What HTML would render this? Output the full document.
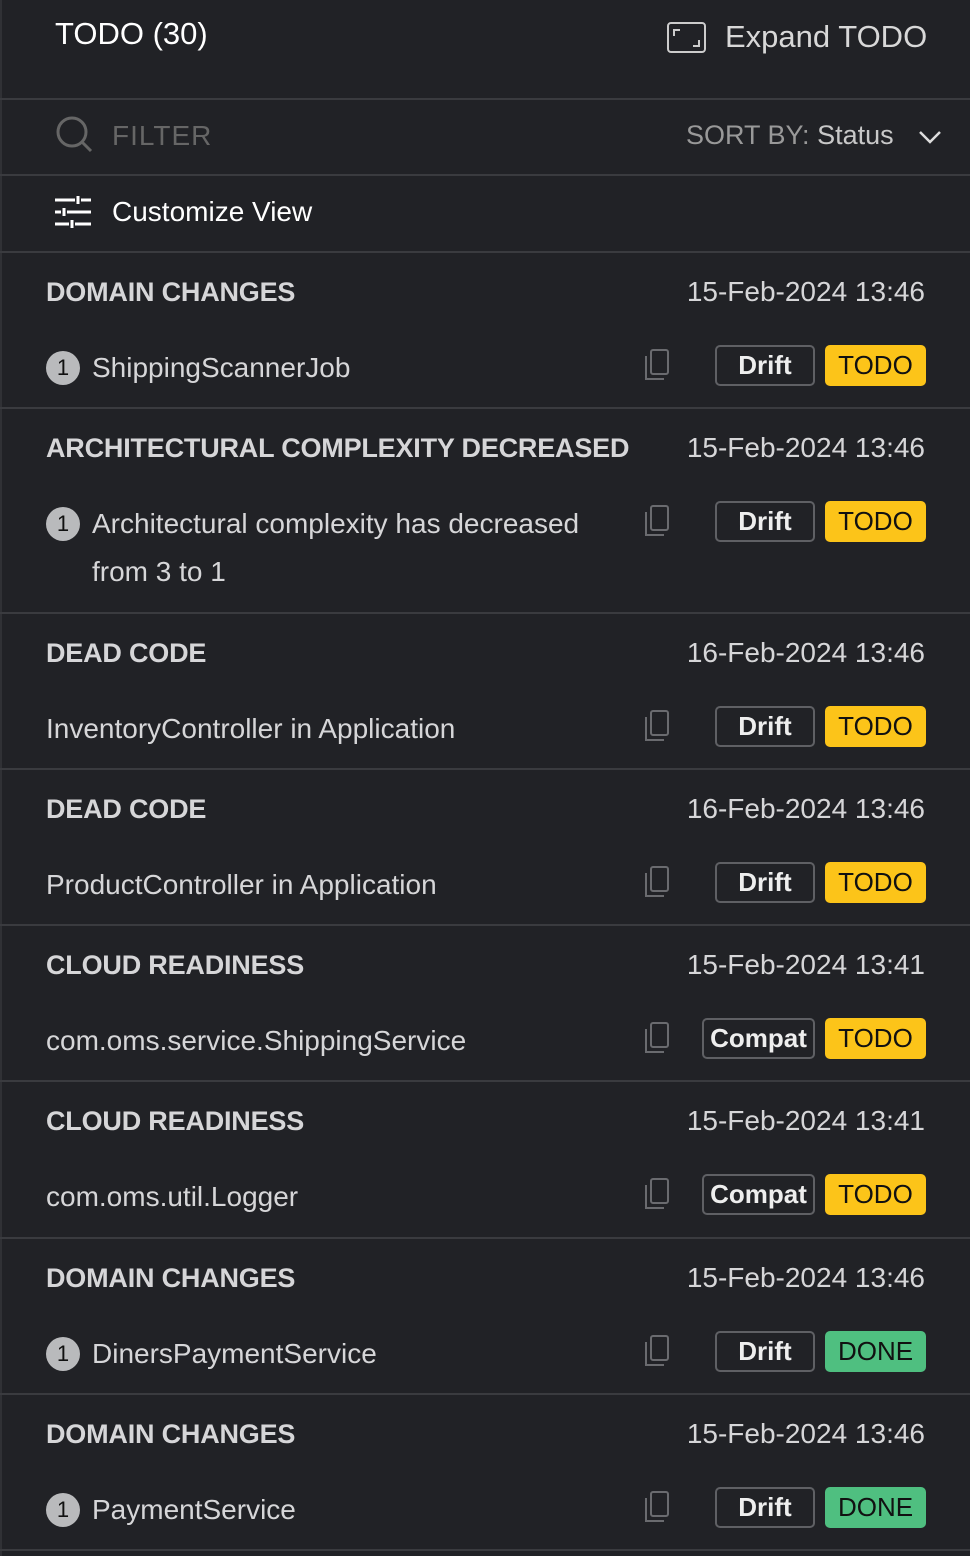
<!DOCTYPE html>
<html><head><style>
*{margin:0;padding:0;box-sizing:border-box}
body{width:970px;height:1556px;background:#212226;font-family:"Liberation Sans",sans-serif;color:#d9d9db;position:relative;overflow:hidden}
.a{position:absolute;white-space:nowrap}
.ln{position:absolute;left:0;width:970px;height:2px;background:#3a3b3f}
.t{font-size:27px;font-weight:bold;letter-spacing:-0.2px;color:#d6d6d8}
.d{font-size:28px;color:#d6d6d8;right:45px}
.b{font-size:28px;color:#d6d6d8}
.n{width:34px;height:34px;border-radius:50%;background:#b9babc;color:#111;font-size:22px;text-align:center;line-height:34px}
.bx{height:41px;border:2px solid #5f6064;border-radius:5px;font-size:26px;font-weight:bold;color:#eee;text-align:center;line-height:37px}
.st{height:41px;border-radius:5px;font-size:26px;color:#111;text-align:center;line-height:41px;left:825px;width:101px}
.y{background:#fcc419}.g{background:#4fbf80}
</style></head><body>
<div class="a" style="left:0;top:0;width:2px;height:1556px;background:#303135"></div>
<div class="a" style="left:55px;top:16px;font-size:31px;color:#fff">TODO (30)</div>
<svg class="a" style="left:667px;top:22px" width="40" height="32" viewBox="0 0 40 32"><rect x="1" y="1" width="37" height="29" rx="3" fill="none" stroke="#ccc" stroke-width="2"/><path d="M7 14V8h6M32 18v6h-6" fill="none" stroke="#ccc" stroke-width="2"/></svg>
<div class="a" style="left:725px;top:19px;font-size:31px;color:#d8d8d8">Expand TODO</div>
<div class="ln" style="top:98px"></div>
<svg class="a" style="left:56px;top:116px" width="38" height="38" viewBox="0 0 38 38"><circle cx="16" cy="16" r="14" fill="none" stroke="#666" stroke-width="3"/><path d="M26 26l9 9" stroke="#666" stroke-width="3"/></svg>
<div class="a" style="left:112px;top:120px;font-size:28px;color:#666;letter-spacing:1px">FILTER</div>
<div class="a" style="left:686px;top:120px;font-size:27px;color:#999">SORT BY: <span style="color:#c8c8c8">Status</span></div>
<svg class="a" style="left:918px;top:128px" width="24" height="18" viewBox="0 0 24 18"><path d="M2 4l10 10 10-10" fill="none" stroke="#ddd" stroke-width="2.5"/></svg>
<div class="ln" style="top:174px"></div>
<svg class="a" style="left:55px;top:196px" width="36" height="32" viewBox="0 0 36 32"><g stroke="#fff" stroke-width="3"><path d="M0 4h20M26 4h10M23 0v8M0 16h6M12 16h24M9 12v8M0 28h14M20 28h16M17 24v8"/></g></svg>
<div class="a" style="left:112px;top:196px;font-size:28px;color:#fff">Customize View</div>
<div class="ln" style="top:251px"></div>

<div id="items"></div>
<script>
const it=[
["DOMAIN CHANGES","15-Feb-2024 13:46","ShippingScannerJob",1,"Drift","TODO",156],
["ARCHITECTURAL COMPLEXITY DECREASED","15-Feb-2024 13:46","Architectural complexity has decreased<br>from 3 to 1",1,"Drift","TODO",205],
["DEAD CODE","16-Feb-2024 13:46","InventoryController in Application",0,"Drift","TODO",156],
["DEAD CODE","16-Feb-2024 13:46","ProductController in Application",0,"Drift","TODO",156],
["CLOUD READINESS","15-Feb-2024 13:41","com.oms.service.ShippingService",0,"Compat","TODO",156],
["CLOUD READINESS","15-Feb-2024 13:41","com.oms.util.Logger",0,"Compat","TODO",157],
["DOMAIN CHANGES","15-Feb-2024 13:46","DinersPaymentService",1,"Drift","DONE",156],
["DOMAIN CHANGES","15-Feb-2024 13:46","PaymentService",1,"Drift","DONE",156]];
let y=252,h='';
for(const [t,d,b,n,k,s,hh] of it){
h+=`<div class="a t" style="left:46px;top:${y+25}px">${t}</div>`;
h+=`<div class="a d" style="top:${y+24}px">${d}</div>`;
const bl=n?92:46;
if(n)h+=`<div class="a n" style="left:46px;top:${y+99}px">1</div>`;
h+=`<div class="a b" style="left:${bl}px;top:${y+92}px;line-height:48px">${b}</div>`;
h+=`<svg class="a" style="left:643px;top:${y+96}px" width="28" height="34" viewBox="0 0 28 34"><rect x="8" y="2" width="17" height="24" rx="2" fill="none" stroke="#6a6b6f" stroke-width="2"/><path d="M3 8v23h18" fill="none" stroke="#6a6b6f" stroke-width="2"/></svg>`;
const bw=k=="Drift"?100:113;
h+=`<div class="a bx" style="left:${815-bw}px;width:${bw}px;top:${y+93}px">${k}</div>`;
h+=`<div class="a st ${s=="TODO"?'y':'g'}" style="top:${y+93}px">${s}</div>`;
y+=hh;h+=`<div class="ln" style="top:${y-1}px"></div>`;
}
document.getElementById('items').innerHTML=h;
</script>
</body></html>
